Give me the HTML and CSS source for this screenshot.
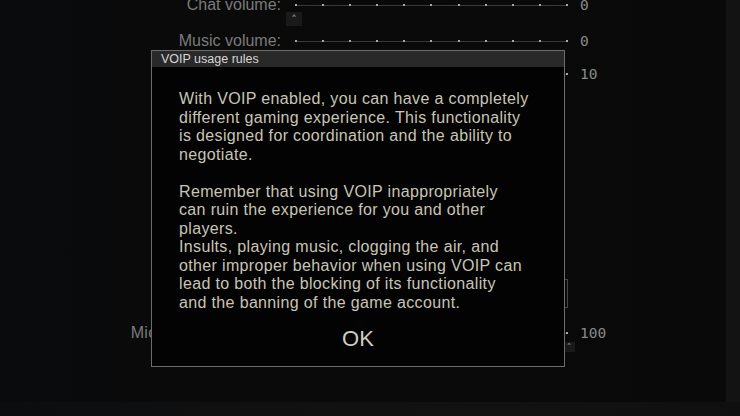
FILE: index.html
```html
<!DOCTYPE html>
<html lang="en">
  <head>
    <meta charset="UTF-8" />
    <meta name="viewport" content="width=device-width, initial-scale=1.0" />
    <title>Sound settings - VOIP</title>
    <link rel="stylesheet" href="styles.css">
  </head>
  <body>

    <div class="screen">
      <!-- Sound settings behind the dialog -->
      <main class="settings">
        <div class="volume-row chat-row">
          <span class="volume-label">Chat volume:</span>
          <div class="slider">
            <i></i><i></i><i></i><i></i><i></i><i></i><i></i><i></i><i></i><i></i><i></i>
          </div>
          <span class="volume-value">0</span>
        </div>
        <button class="scroll-arrow top-arrow">&#708;</button>
        <div class="volume-row music-row">
          <span class="volume-label">Music volume:</span>
          <div class="slider">
            <i></i><i></i><i></i><i></i><i></i><i></i><i></i><i></i><i></i><i></i><i></i>
          </div>
          <span class="volume-value">0</span>
        </div>
        <div class="volume-row voip-row">
          <span class="volume-label">VOIP volume:</span>
          <div class="slider">
            <i></i><i></i><i></i><i></i><i></i><i></i><i></i><i></i><i></i><i></i><i></i>
          </div>
          <span class="volume-value">10</span>
        </div>
        <div class="device-box"></div>
        <div class="volume-row mic-row">
          <span class="volume-label">Microphone volume:</span>
          <div class="slider">
            <i></i><i></i><i></i><i></i><i></i><i></i><i></i><i></i><i></i><i></i><i></i>
          </div>
          <span class="volume-value">100</span>
        </div>
        <button class="scroll-arrow bottom-arrow">&#708;</button>
      </main>
      <div class="side-edge"></div>
    </div>
    <div class="bottom-band"></div>

    <!-- VOIP rules dialog -->
    <div class="popup-overlay">
      <div class="popup-content">
        <div class="popup-title">VOIP usage rules</div>
        <div class="popup-text">
          <p>
            With VOIP enabled, you can have a completely<br>
            different gaming experience. This functionality<br>
            is designed for coordination and the ability to<br>
            negotiate.
          </p>
          <p>
            Remember that using VOIP inappropriately<br>
            can ruin the experience for you and other<br>
            players.<br>
            Insults, playing music, clogging the air, and<br>
            other improper behavior when using VOIP can<br>
            lead to both the blocking of its functionality<br>
            and the banning of the game account.
          </p>
        </div>
        <button class="ok-button">OK</button>
      </div>
    </div>

  </body>
</html>
```

FILE: styles.css
```css
/* Reset */
* {
  margin: 0;
  padding: 0;
  box-sizing: border-box;
}

body {
  width: 740px;
  height: 416px;
  overflow: hidden;
  background-color: #0a0a0a;
  font-family: "Liberation Sans", Arial, sans-serif;
}

/* Background screen */
.screen {
  display: flex;
  height: 402px;
}

.settings {
  flex: 1;
  display: flex;
  flex-direction: column;
  align-items: flex-start;
  background: linear-gradient(90deg, #0a0b0d 0%, #0a0a0a 30%, #090909 100%);
}

.side-edge {
  width: 14px;
  background-color: #131313;
}

.bottom-band {
  height: 14px;
  background: linear-gradient(90deg, #0c0d0f 0%, #111111 45%, #121212 70%, #0f0f0f 100%);
}

/* Volume rows */
.volume-row {
  display: flex;
  align-items: center;
  height: 14px;
}

.chat-row {
  margin-top: -2px;
}

.music-row {
  margin-top: 8px;
}

.voip-row {
  margin-top: 19px;
}

.mic-row {
  margin-top: 18px;
}

.volume-label {
  width: 281px;
  text-align: right;
  font-size: 16px;
  line-height: 14px;
  color: #7b7b7b;
}

.mic-row .volume-label {
  letter-spacing: 0.35px;
}

.slider {
  width: 273px;
  margin-left: 14px;
  display: flex;
  justify-content: space-between;
  align-items: center;
  height: 2px;
  background: linear-gradient(#3a3a3a, #3a3a3a) center / 100% 1px no-repeat;
}

.slider i {
  width: 2px;
  height: 2px;
  background-color: #a8a8a8;
}

.volume-value {
  margin-left: 12px;
  font-family: "DejaVu Sans Mono", monospace;
  font-size: 14.5px;
  line-height: 14px;
  color: #8a8a8a;
}

.scroll-arrow {
  display: flex;
  justify-content: center;
  align-items: center;
  border: none;
  background-color: #1a1a1a;
  color: #9a9a9a;
  font-size: 11px;
  line-height: 1;
  font-family: "DejaVu Sans", sans-serif;
}

.top-arrow {
  width: 16px;
  height: 14px;
  margin-left: 286px;
}

.bottom-arrow {
  width: 12px;
  height: 10px;
  margin-left: 563px;
  margin-top: 2px;
  font-size: 9px;
}

.device-box {
  width: 273px;
  height: 29px;
  margin-left: 295px;
  margin-top: 198px;
  border: 1px solid #444;
}

/* Popup */
.popup-overlay {
  position: fixed;
  top: 0;
  left: 0;
  width: 100%;
  height: 100%;
  padding: 50px 0 0 151px;
}

.popup-content {
  width: 414px;
  height: 317px;
  border: 1px solid #6c6c6c;
  background-color: #030303;
  display: flex;
  flex-direction: column;
}

.popup-title {
  height: 16px;
  padding-left: 9px;
  background-color: #292929;
  color: #d6d6d6;
  font-size: 12.5px;
  line-height: 16px;
}

.popup-text {
  padding: 23px 0 0 27px;
  font-size: 16px;
  line-height: 18.5px;
  letter-spacing: 0.35px;
  white-space: nowrap;
  color: #c8c5b6;
}

.popup-text p + p {
  margin-top: 18.5px;
}

.ok-button {
  align-self: center;
  margin-top: 14px;
  background: none;
  border: none;
  color: #cfcdc2;
  font-family: "Liberation Sans", Arial, sans-serif;
  font-size: 22px;
  line-height: 26px;
  cursor: pointer;
}
```
